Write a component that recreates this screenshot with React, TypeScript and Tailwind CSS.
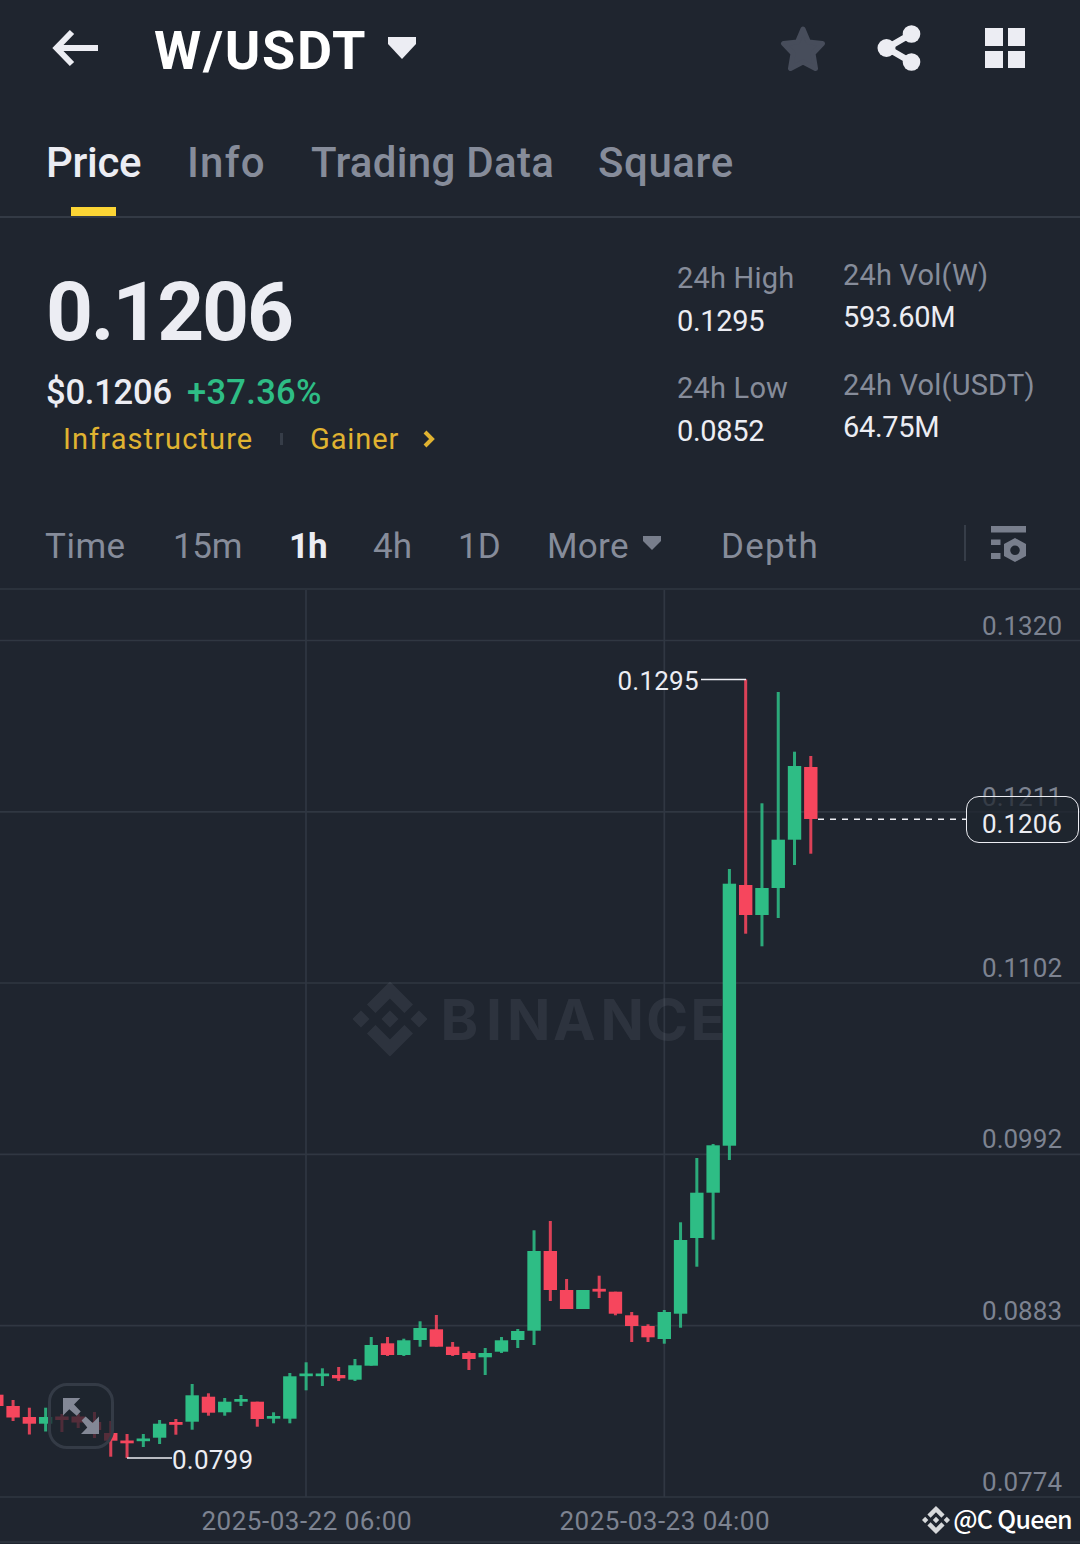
import { SiBinance } from "react-icons/si";

type Candle = {
  up: boolean;
  high: number;
  low: number;
  top: number;
  bottom: number;
};

const c = (up: number, high: number, top: number, bottom: number, low: number): Candle => ({
  up: up === 1,
  high,
  low,
  top,
  bottom,
});

// One entry per hour, left to right, in chart units: side, high, body top, body bottom, low
const candles: Candle[] = [
  c(0, 1394.7, 1394.7, 1406, 1406),
  c(0, 1400, 1406, 1417.5, 1421),
  c(0, 1407.7, 1417, 1423.7, 1434.5),
  c(1, 1407.7, 1417, 1423.7, 1431.5),
  c(0, 1414, 1416.5, 1420, 1432),
  c(0, 1414, 1416.5, 1422.5, 1428),
  c(0, 1412, 1422, 1430, 1438),
  c(0, 1421, 1433, 1440.7, 1456.7),
  c(0, 1434, 1440.5, 1443.3, 1458),
  c(1, 1434, 1438.5, 1441.2, 1447),
  c(1, 1420, 1423.7, 1437.7, 1444),
  c(0, 1419, 1422, 1424.8, 1434.7),
  c(1, 1384, 1395.3, 1421.7, 1429.7),
  c(0, 1393.3, 1396.7, 1412.7, 1415.7),
  c(1, 1398, 1401.7, 1412.3, 1415.7),
  c(1, 1395, 1399, 1401.7, 1406),
  c(0, 1401.7, 1401.7, 1419, 1426.7),
  c(1, 1412.3, 1416, 1418.7, 1423.3),
  c(1, 1373, 1376.3, 1418.7, 1423.3),
  c(1, 1362.3, 1373.5, 1376.2, 1390.3),
  c(1, 1368.3, 1373.5, 1376.2, 1386),
  c(0, 1367, 1375, 1378.3, 1381),
  c(1, 1359, 1365.3, 1379.7, 1381),
  c(1, 1337, 1345, 1365.7, 1365.7),
  c(0, 1337, 1343.3, 1355, 1356),
  c(1, 1338.7, 1340.3, 1355, 1356),
  c(1, 1321.3, 1328, 1340, 1346.7),
  c(0, 1315, 1329.3, 1346.7, 1346.7),
  c(0, 1342, 1346.7, 1355, 1356),
  c(0, 1351.3, 1353, 1359, 1370),
  c(1, 1348, 1353, 1357.3, 1375),
  c(1, 1337, 1340.3, 1351.7, 1353),
  c(1, 1329, 1331, 1340, 1348),
  c(1, 1230.3, 1251, 1330.7, 1345),
  c(0, 1221, 1251, 1290, 1301),
  c(0, 1279, 1290, 1309, 1309),
  c(1, 1290, 1290, 1309, 1309),
  c(0, 1275.7, 1288.8, 1291.6, 1298),
  c(0, 1291.7, 1291.7, 1313.7, 1315.3),
  c(0, 1312, 1315.3, 1326, 1342),
  c(0, 1324.3, 1326, 1337.3, 1342),
  c(1, 1310, 1312, 1339, 1343.7),
  c(1, 1222.3, 1240, 1313.7, 1327.7),
  c(1, 1158, 1192.7, 1238, 1266.7),
  c(1, 1144, 1145.3, 1192.7, 1239.7),
  c(1, 869, 883.7, 1145.7, 1160),
  c(0, 679.3, 885, 915, 933.7),
  c(1, 803.3, 888, 915, 946.3),
  c(1, 692, 839.7, 888, 918),
  c(1, 751.7, 766, 839.7, 865),
  c(0, 756, 767, 819, 853.7),
];

const STEP = 16.28;
const FIRST_X = -3.2;

const priceLevels = [
  { label: "0.1320", y: 640.5 },
  { label: "0.1211", y: 811.8 },
  { label: "0.1102", y: 983 },
  { label: "0.0992", y: 1154.3 },
  { label: "0.0883", y: 1325.6 },
  { label: "0.0774", y: 1497 },
];

const watermark = [
  { ch: "B", x: 440.5 },
  { ch: "I", x: 486 },
  { ch: "N", x: 507 },
  { ch: "A", x: 553 },
  { ch: "N", x: 600.5 },
  { ch: "C", x: 646 },
  { ch: "E", x: 690.5 },
];

const Header = () => (
  <header className="flex h-24 items-center pl-[52px] pr-[55px]">
    <svg className="h-[38px] w-[46px]" viewBox="0 0 46 38" fill="none" stroke="#ecedf3" strokeWidth="6">
      <path d="M20 3 4.5 19 20 35" />
      <path d="M4 19h42" />
    </svg>
    <h1 className="ml-[56px] w-[213px] whitespace-nowrap pt-[6px] text-[54px] font-bold leading-none tracking-[1.700px] text-white">
      W/USDT
    </h1>
    <svg className="ml-[21px] h-[22px] w-7" viewBox="0 0 28 22" fill="#ecedf3">
      <path d="M0 0h28v7L14 22 0 7z" />
    </svg>
    <div className="ml-auto flex items-center">
      <svg className="h-[46px] w-[46px]" viewBox="0 0 46 46">
        <path
          d="M23 4 28.500 17 42.500 18.500 33 28.500 35.500 43.500 23 37 10.500 43.500 13 28.500 3.500 18.500 17.500 17z"
          fill="#474d5b"
          stroke="#474d5b"
          strokeWidth="5"
          strokeLinejoin="round"
        />
      </svg>
      <svg className="ml-[51px] h-[46px] w-11" viewBox="0 0 44 46" fill="#ecedf3">
        <path d="M35 8.500 10 23l25 14.500" fill="none" stroke="#ecedf3" strokeWidth="6.500" />
        <circle cx="34.500" cy="9" r="8.800" />
        <circle cx="9.500" cy="23" r="9" />
        <circle cx="34.500" cy="37" r="8.800" />
      </svg>
      <div className="ml-[64px] grid grid-cols-2 gap-[5px]">
        <span className="h-[17.500px] w-[17.500px] bg-[#ecedf3]" />
        <span className="h-[17.500px] w-[17.500px] bg-[#ecedf3]" />
        <span className="h-[17.500px] w-[17.500px] bg-[#ecedf3]" />
        <span className="h-[17.500px] w-[17.500px] bg-[#ecedf3]" />
      </div>
    </div>
  </header>
);

const Tabs = () => (
  <nav className="flex h-[122px] whitespace-nowrap border-b-2 border-[#333a45] pl-[46px] text-[42px] font-medium leading-[134px] text-[#868c9a]">
    <div className="relative h-[120px] w-[141px] tracking-[-0.3px] text-[#ecedf3]">
      Price
      <span className="absolute bottom-0 left-[25px] h-[9px] w-[45px] bg-[#fcd535]" />
    </div>
    <div className="w-[124px] tracking-[1.2px]">Info</div>
    <div className="w-[287px] tracking-[0.3px]">Trading Data</div>
    <div className="tracking-[0.6px]">Square</div>
  </nav>
);

const Stat = ({ label, value }: { label: string; value: string }) => (
  <div>
    <div className="tracking-[0.2px] text-[#868c9a]">{label}</div>
    <div className="tracking-[-0.3px] text-[#ecedf3]">{value}</div>
  </div>
);

const Summary = () => (
  <section className="flex h-[286px] whitespace-nowrap">
    <div className="w-[677px] pl-[46px] pt-[58px]">
      <div className="text-[82px] font-bold leading-[72px] tracking-[-2.2px] text-[#ecedf3]">0.1206</div>
      <div className="mt-6 flex text-[34.500px] font-medium leading-10 text-[#ecedf3]">
        <span className="w-[141px] tracking-[-0.2px]">$0.1206</span>
        <span className="tracking-[0.3px] text-[#2ebd85]">+37.36%</span>
      </div>
      <div className="mt-[9px] flex items-center pl-[17px] text-[29px] leading-9 text-[#e0b331]">
        <span className="w-[217px] tracking-[1.1px]">Infrastructure</span>
        <span className="h-3 w-[3px] bg-[#363d48]" />
        <span className="ml-[27px] w-[113px] tracking-[0.9px]">Gainer</span>
        <svg className="h-[18px] w-3" viewBox="0 0 12 18" fill="none" stroke="#e0b331" strokeWidth="4">
          <path d="m2 2 7 7-7 7" />
        </svg>
      </div>
    </div>
    <div className="flex text-[29px]">
      <div className="flex w-[166px] flex-col gap-6 pt-[39px] leading-[43px]">
        <Stat label="24h High" value="0.1295" />
        <Stat label="24h Low" value="0.0852" />
      </div>
      <div className="flex flex-col gap-[25.500px] pt-[36px] leading-[42px]">
        <Stat label="24h Vol(W)" value="593.60M" />
        <Stat label="24h Vol(USDT)" value="64.75M" />
      </div>
    </div>
  </section>
);

const Intervals = () => (
  <div className="flex h-[86px] items-center whitespace-nowrap border-b-2 border-[#2b323c] pl-[45px] text-[35px] text-[#868c9a]">
    <span className="w-[128px] pt-[2px] tracking-[0.5px]">Time</span>
    <span className="w-[116px] pt-[2px] tracking-[-0.3px]">15m</span>
    <span className="w-[84px] pt-[2px] font-bold tracking-[-1.2px] text-[#ecedf3]">1h</span>
    <span className="w-[85px] pt-[2px]">4h</span>
    <span className="w-[89px] pt-[2px]">1D</span>
    <span className="w-[96px] pt-[2px] tracking-[0.3px]">More</span>
    <svg className="-mt-[6px] h-[14px] w-[18px]" viewBox="0 0 18 14" fill="#787e8c">
      <path d="M0 0h18v5L9 14 0 5z" />
    </svg>
    <span className="ml-[60px] pt-[2px] tracking-[1.2px]">Depth</span>
    <span className="-mt-[6px] ml-auto h-9 w-[2px] bg-[#363d48]" />
    <svg className="-mt-1 ml-[25px] mr-[54px] h-9 w-[35px]" viewBox="0 0 35 36" fill="#787e8c">
      <path d="M0 0h35v6.500H0zM0 13.500h9.500V19H0zM0 27h9.500v6H0z" />
      <path
        fillRule="evenodd"
        d="M24 12 35 18v12l-11 6-11-6V18zM24 19.500a4.800 4.800 0 1 0 0 9.600 4.800 4.800 0 0 0 0-9.600z"
      />
    </svg>
  </div>
);

const Chart = () => (
  <div className="relative h-[954px]">
    <svg className="block h-[954px] w-[1080px]" viewBox="0 590 1080 954" fontSize="26">
      {/* grid */}
      <g stroke="#303742" strokeWidth="1.700">
        {priceLevels.map((level) => (
          <line key={level.label} x1="0" x2="1080" y1={level.y} y2={level.y} />
        ))}
        <line x1="306" x2="306" y1="590" y2="1497" />
        <line x1="664.300" x2="664.300" y1="590" y2="1497" />
        <line x1="0" x2="1080" y1="1542" y2="1542" />
      </g>

      {/* brand watermark */}
      <SiBinance x="352.500" y="981.500" size={75} color="#868c9a" opacity="0.140" />
      <g fill="#868c9a" fillOpacity="0.140" fontFamily="Inter" fontWeight="700" fontSize="57">
        {watermark.map(({ ch, x }) => (
          <text key={x} x={x} y="1040">
            {ch}
          </text>
        ))}
      </g>

      {candles.map((candle, i) => {
        const x = FIRST_X + i * STEP;
        return (
          <g key={i} fill={candle.up ? "#2ebd85" : "#f6465d"}>
            <rect x={x - 1.5} y={candle.high} width="3" height={candle.low - candle.high} opacity="0.880" />
            <rect x={x - 6.7} y={candle.top} width="13.400" height={candle.bottom - candle.top} />
          </g>
        );
      })}

      {/* price axis */}
      <g fill="#7d8391">
        {priceLevels.map((level) => (
          <text key={level.label} x="982" y={level.y - 6} textLength="80">
            {level.label}
          </text>
        ))}
        <text x="201.500" y="1530" textLength="210">
          2025-03-22 06:00
        </text>
        <text x="559.500" y="1530" textLength="210">
          2025-03-23 04:00
        </text>
      </g>

      {/* high / low callouts */}
      <g fill="#ecedf3" stroke="none">
        <text x="617.500" y="690" textLength="81">
          0.1295
        </text>
        <text x="172" y="1469" textLength="81">
          0.0799
        </text>
      </g>
      <g stroke="#ecedf3" strokeWidth="1.600">
        <line x1="701" x2="746" y1="679.500" y2="679.500" />
        <line x1="127" x2="172" y1="1458" y2="1458" />
        <line x1="818" x2="967" y1="819.300" y2="819.300" strokeDasharray="6 6" />
      </g>
    </svg>

    <div className="absolute right-px top-[206px] h-[47px] w-[113px] whitespace-nowrap rounded-[13px] border-[1.500px] border-[#ecedf3] bg-[#1f252f]/75 pl-[15px] text-[26px] leading-[54px] text-[#ecedf3]">
      0.1206
    </div>

    <div className="absolute left-12 top-[793px] h-[66px] w-[66px] rounded-[19px] border-[3px] border-[#343b46] bg-[#1f252f]/75">
      <svg className="h-[60px] w-[60px]" viewBox="3 3 60 60" fill="#838896">
        <path d="M15 15h17.300L26 21.500l6.700 7-4 4.300-7.400-6.600L15 32.500z" />
        <path d="M51 51H33l6.300-6.500-5.700-7 4-4 7 6.400L51 33.500z" />
      </svg>
    </div>

    <div className="absolute right-[8px] top-[912px] flex h-9 items-center whitespace-nowrap font-['Noto_Sans_CJK_SC',sans-serif] text-[25px] font-medium tracking-[-0.700px] text-white">
      <SiBinance className="mr-[3px] h-7 w-7 text-[#d6d8da]" />
      <span className="-mt-[2px]">@C Queen</span>
    </div>
  </div>
);

export default function App() {
  return (
    <main className="h-[1544px] w-[1080px] overflow-hidden bg-[#1f252f] font-['Roboto',sans-serif]">
      <Header />
      <Tabs />
      <Summary />
      <Intervals />
      <Chart />
    </main>
  );
}
